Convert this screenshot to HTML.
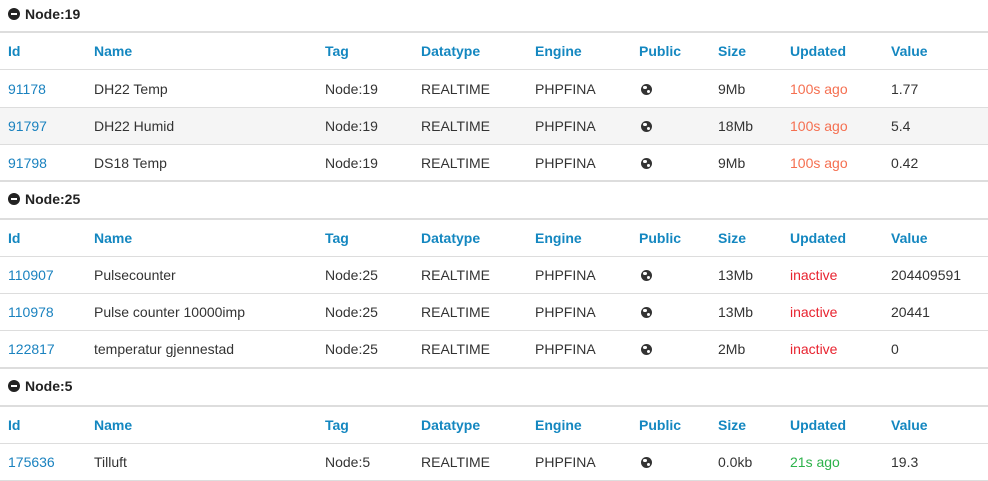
<!DOCTYPE html>
<html><head><meta charset="utf-8"><style>
body{margin:0;width:988px;height:481px;background:#fff;font-family:"Liberation Sans",Arial,sans-serif;font-size:14px;color:#333;position:relative;overflow:hidden}
.t{position:absolute;left:8px;font-weight:bold;font-size:14px;color:#222;height:20px;line-height:20px}
.t i{display:inline-block;width:12px;height:12px;border-radius:50%;background:#222;position:relative;vertical-align:-1px;margin-right:5px}
.t i:after{content:"";position:absolute;left:3px;top:5px;width:6px;height:2px;background:#fff}
.l2{position:absolute;left:0;width:988px;height:2px;background:#ddd}
.r{position:absolute;left:0;width:988px;height:36px;line-height:36px;border-bottom:1px solid #ddd}
.r span{position:absolute;top:0;white-space:nowrap}
.h span{color:#1487c0;font-weight:bold}
.a{color:#1a82bf}
.o{color:#f56f50}.in{color:#e8232f}.g{color:#2cb24a}
.gl{display:inline-block;width:11px;height:11px;border-radius:50%;background:#333;position:relative;vertical-align:-1px;margin-left:2px}
.gl:before{content:"";position:absolute;left:2px;top:2px;width:4px;height:3px;background:#fff;border-radius:2px}
.gl:after{content:"";position:absolute;left:6px;top:6px;width:3px;height:3px;background:#fff;border-radius:2px}
</style></head><body>
<div class="t" style="top:4px"><i></i>Node:19</div>
<div class="l2" style="top:31px"></div>
<div class="r h" style="top:33px"><span style="left:8px">Id</span><span style="left:94px">Name</span><span style="left:325px">Tag</span><span style="left:421px">Datatype</span><span style="left:535px">Engine</span><span style="left:639px">Public</span><span style="left:718px">Size</span><span style="left:790px">Updated</span><span style="left:891px">Value</span></div>
<div class="r" style="top:71px"><span class="a" style="left:8px">91178</span><span style="left:94px">DH22 Temp</span><span style="left:325px">Node:19</span><span style="left:421px">REALTIME</span><span style="left:535px">PHPFINA</span><span style="left:639px"><b class="gl"></b></span><span style="left:718px">9Mb</span><span class="o" style="left:790px">100s ago</span><span style="left:891px">1.77</span></div>
<div class="r" style="top:108px;background:#f5f5f5"><span class="a" style="left:8px">91797</span><span style="left:94px">DH22 Humid</span><span style="left:325px">Node:19</span><span style="left:421px">REALTIME</span><span style="left:535px">PHPFINA</span><span style="left:639px"><b class="gl"></b></span><span style="left:718px">18Mb</span><span class="o" style="left:790px">100s ago</span><span style="left:891px">5.4</span></div>
<div class="r" style="top:145px;border:0"><span class="a" style="left:8px">91798</span><span style="left:94px">DS18 Temp</span><span style="left:325px">Node:19</span><span style="left:421px">REALTIME</span><span style="left:535px">PHPFINA</span><span style="left:639px"><b class="gl"></b></span><span style="left:718px">9Mb</span><span class="o" style="left:790px">100s ago</span><span style="left:891px">0.42</span></div>
<div class="l2" style="top:180px"></div>

<div class="t" style="top:189px"><i></i>Node:25</div>
<div class="l2" style="top:218px"></div>
<div class="r h" style="top:220px"><span style="left:8px">Id</span><span style="left:94px">Name</span><span style="left:325px">Tag</span><span style="left:421px">Datatype</span><span style="left:535px">Engine</span><span style="left:639px">Public</span><span style="left:718px">Size</span><span style="left:790px">Updated</span><span style="left:891px">Value</span></div>
<div class="r" style="top:257px"><span class="a" style="left:8px">110907</span><span style="left:94px">Pulsecounter</span><span style="left:325px">Node:25</span><span style="left:421px">REALTIME</span><span style="left:535px">PHPFINA</span><span style="left:639px"><b class="gl"></b></span><span style="left:718px">13Mb</span><span class="in" style="left:790px">inactive</span><span style="left:891px">204409591</span></div>
<div class="r" style="top:294px"><span class="a" style="left:8px">110978</span><span style="left:94px">Pulse counter 10000imp</span><span style="left:325px">Node:25</span><span style="left:421px">REALTIME</span><span style="left:535px">PHPFINA</span><span style="left:639px"><b class="gl"></b></span><span style="left:718px">13Mb</span><span class="in" style="left:790px">inactive</span><span style="left:891px">20441</span></div>
<div class="r" style="top:331px;border:0"><span class="a" style="left:8px">122817</span><span style="left:94px">temperatur gjennestad</span><span style="left:325px">Node:25</span><span style="left:421px">REALTIME</span><span style="left:535px">PHPFINA</span><span style="left:639px"><b class="gl"></b></span><span style="left:718px">2Mb</span><span class="in" style="left:790px">inactive</span><span style="left:891px">0</span></div>
<div class="l2" style="top:367px"></div>

<div class="t" style="top:376px"><i></i>Node:5</div>
<div class="l2" style="top:405px"></div>
<div class="r h" style="top:407px"><span style="left:8px">Id</span><span style="left:94px">Name</span><span style="left:325px">Tag</span><span style="left:421px">Datatype</span><span style="left:535px">Engine</span><span style="left:639px">Public</span><span style="left:718px">Size</span><span style="left:790px">Updated</span><span style="left:891px">Value</span></div>
<div class="r" style="top:444px"><span class="a" style="left:8px">175636</span><span style="left:94px">Tilluft</span><span style="left:325px">Node:5</span><span style="left:421px">REALTIME</span><span style="left:535px">PHPFINA</span><span style="left:639px"><b class="gl"></b></span><span style="left:718px">0.0kb</span><span class="g" style="left:790px">21s ago</span><span style="left:891px">19.3</span></div>
</body></html>
